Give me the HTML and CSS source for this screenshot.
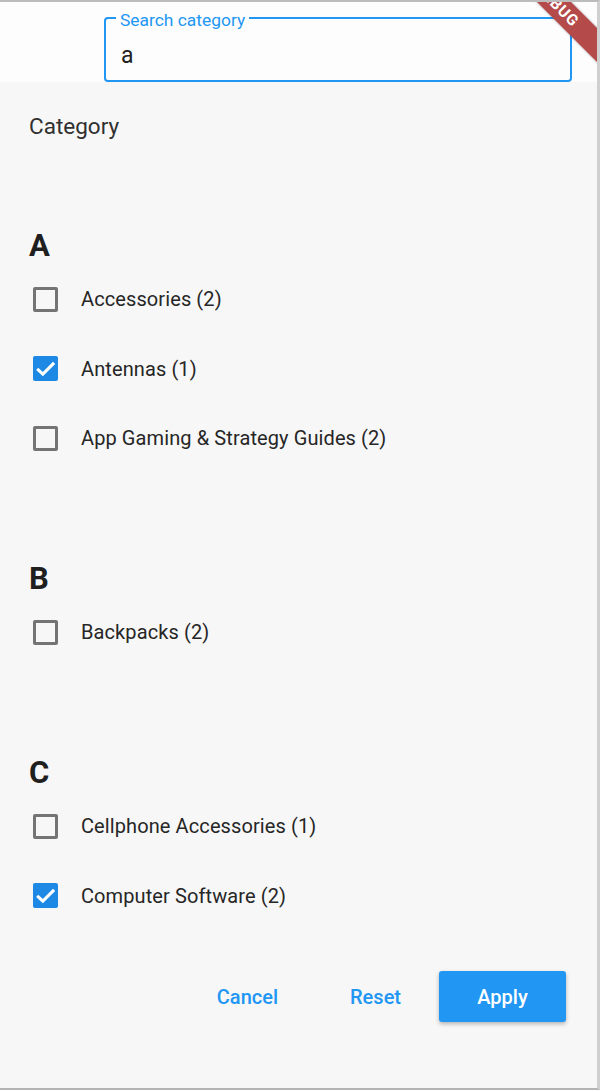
FILE: index.html
```html
<!DOCTYPE html>
<html lang="en">
<head>
<meta charset="utf-8">
<title>Category filter</title>
<link rel="stylesheet" href="styles.css">
</head>
<body>
<div class="screen">
  <header class="search-bar">
    <div class="search-field">
      <span class="search-label">Search category</span>
      <span class="search-value">a</span>
    </div>
  </header>

  <main class="content">
    <div class="title">Category</div>

    <section class="group">
      <h2 class="group-letter">A</h2>
      <div class="option"><span class="box"></span><span class="option-text">Accessories (2)</span></div>
      <div class="option"><span class="box checked"><svg viewBox="0 0 18 18"><path d="M3 9.2 L7.1 13.1 L15.2 5"/></svg></span><span class="option-text">Antennas (1)</span></div>
      <div class="option"><span class="box"></span><span class="option-text">App Gaming &amp; Strategy Guides (2)</span></div>
    </section>

    <section class="group">
      <h2 class="group-letter">B</h2>
      <div class="option"><span class="box"></span><span class="option-text">Backpacks (2)</span></div>
    </section>

    <section class="group">
      <h2 class="group-letter">C</h2>
      <div class="option"><span class="box"></span><span class="option-text">Cellphone Accessories (1)</span></div>
      <div class="option"><span class="box checked"><svg viewBox="0 0 18 18"><path d="M3 9.2 L7.1 13.1 L15.2 5"/></svg></span><span class="option-text">Computer Software (2)</span></div>
    </section>

    <div class="actions">
      <button class="btn btn-text btn-cancel">Cancel</button>
      <button class="btn btn-text btn-reset">Reset</button>
      <button class="btn btn-filled">Apply</button>
    </div>
  </main>

  <div class="debug-banner"><div class="ribbon">DEBUG</div></div>
</div>
</body>
</html>
```

FILE: styles.css
```css
html, body {
  margin: 0;
  padding: 0;
  background: #f7f7f7;
}

.screen {
  position: relative;
  width: 600px;
  height: 1090px;
  box-sizing: border-box;
  border-top: 2px solid #bcbcbc;
  border-bottom: 2px solid #b4b4b4;
  border-right: 3px solid #d0d0d0;
  background: #f7f7f7;
  overflow: hidden;
  font-family: Roboto, "Noto Sans", sans-serif;
  color: #212121;
}

/* search header */
.search-bar {
  height: 80px;
  box-sizing: border-box;
  padding: 15px 25px 0 104px;
  background: #fdfdfd;
}

.search-field {
  position: relative;
  height: 65px;
  box-sizing: border-box;
  border: 2.5px solid #2196f3;
  border-radius: 4px;
  padding: 23px 0 0 15px;
}

.search-label {
  position: absolute;
  top: -9px;
  left: 10px;
  padding: 0 4px;
  background: #fdfdfd;
  color: #2196f3;
  font-size: 17.4px;
  line-height: 20px;
}

.search-value {
  display: block;
  font-size: 23px;
  line-height: 28px;
  color: #222;
}

/* list */
.content {
  padding: 31px 0 0 29px;
}

.title {
  font-size: 22.5px;
  line-height: 27px;
  color: #303030;
}

.group {
  margin-top: 87.5px;
}

.group-letter {
  margin: 0;
  padding-bottom: 1px;
  font-size: 31px;
  line-height: 36px;
  font-weight: 700;
  color: #1f1f1f;
}

.option {
  display: flex;
  align-items: center;
  gap: 23px;
  height: 69.5px;
  padding-left: 4px;
}

.box {
  width: 25px;
  height: 25px;
  box-sizing: border-box;
  border: 3px solid #747474;
  border-radius: 2px;
  flex: none;
}

.box.checked {
  border: none;
  background: #1e88e5;
}

.box svg {
  display: block;
  width: 25px;
  height: 25px;
}

.box svg path {
  fill: none;
  stroke: #fff;
  stroke-width: 2.2;
}

.option-text {
  font-size: 20px;
  letter-spacing: 0.1px;
  color: #262626;
}

/* actions */
.actions {
  display: flex;
  justify-content: flex-end;
  margin-top: 40.75px;
  padding-right: 31px;
}

.btn {
  height: 51px;
  border: none;
  font-family: Roboto, "Noto Sans", sans-serif;
  font-size: 20px;
  font-weight: 500;
  padding: 0 20px;
  border-radius: 3px;
}

.btn-text {
  background: transparent;
  color: #2196f3;
}

.btn-reset {
  margin-left: 32px;
}

.btn-filled {
  margin-left: 18px;
  width: 127px;
  background: #2196f3;
  color: #fff;
  box-shadow: 0 2px 4px rgba(0, 0, 0, 0.28);
}

/* debug ribbon in the corner */
.debug-banner {
  position: absolute;
  top: -2px;
  right: -3px;
  width: 100px;
  height: 100px;
  overflow: hidden;
  pointer-events: none;
}

.ribbon {
  position: absolute;
  left: -23px;
  top: -7px;
  width: 160px;
  height: 24px;
  transform: rotate(45deg);
  background: #b54a4a;
  color: #fff;
  font-family: Roboto, "Noto Sans", sans-serif;
  font-weight: 700;
  font-size: 15.5px;
  line-height: 24px;
  text-align: center;
  letter-spacing: 1px;
  box-shadow: 0 0 3px rgba(0, 0, 0, 0.3);
}
```
